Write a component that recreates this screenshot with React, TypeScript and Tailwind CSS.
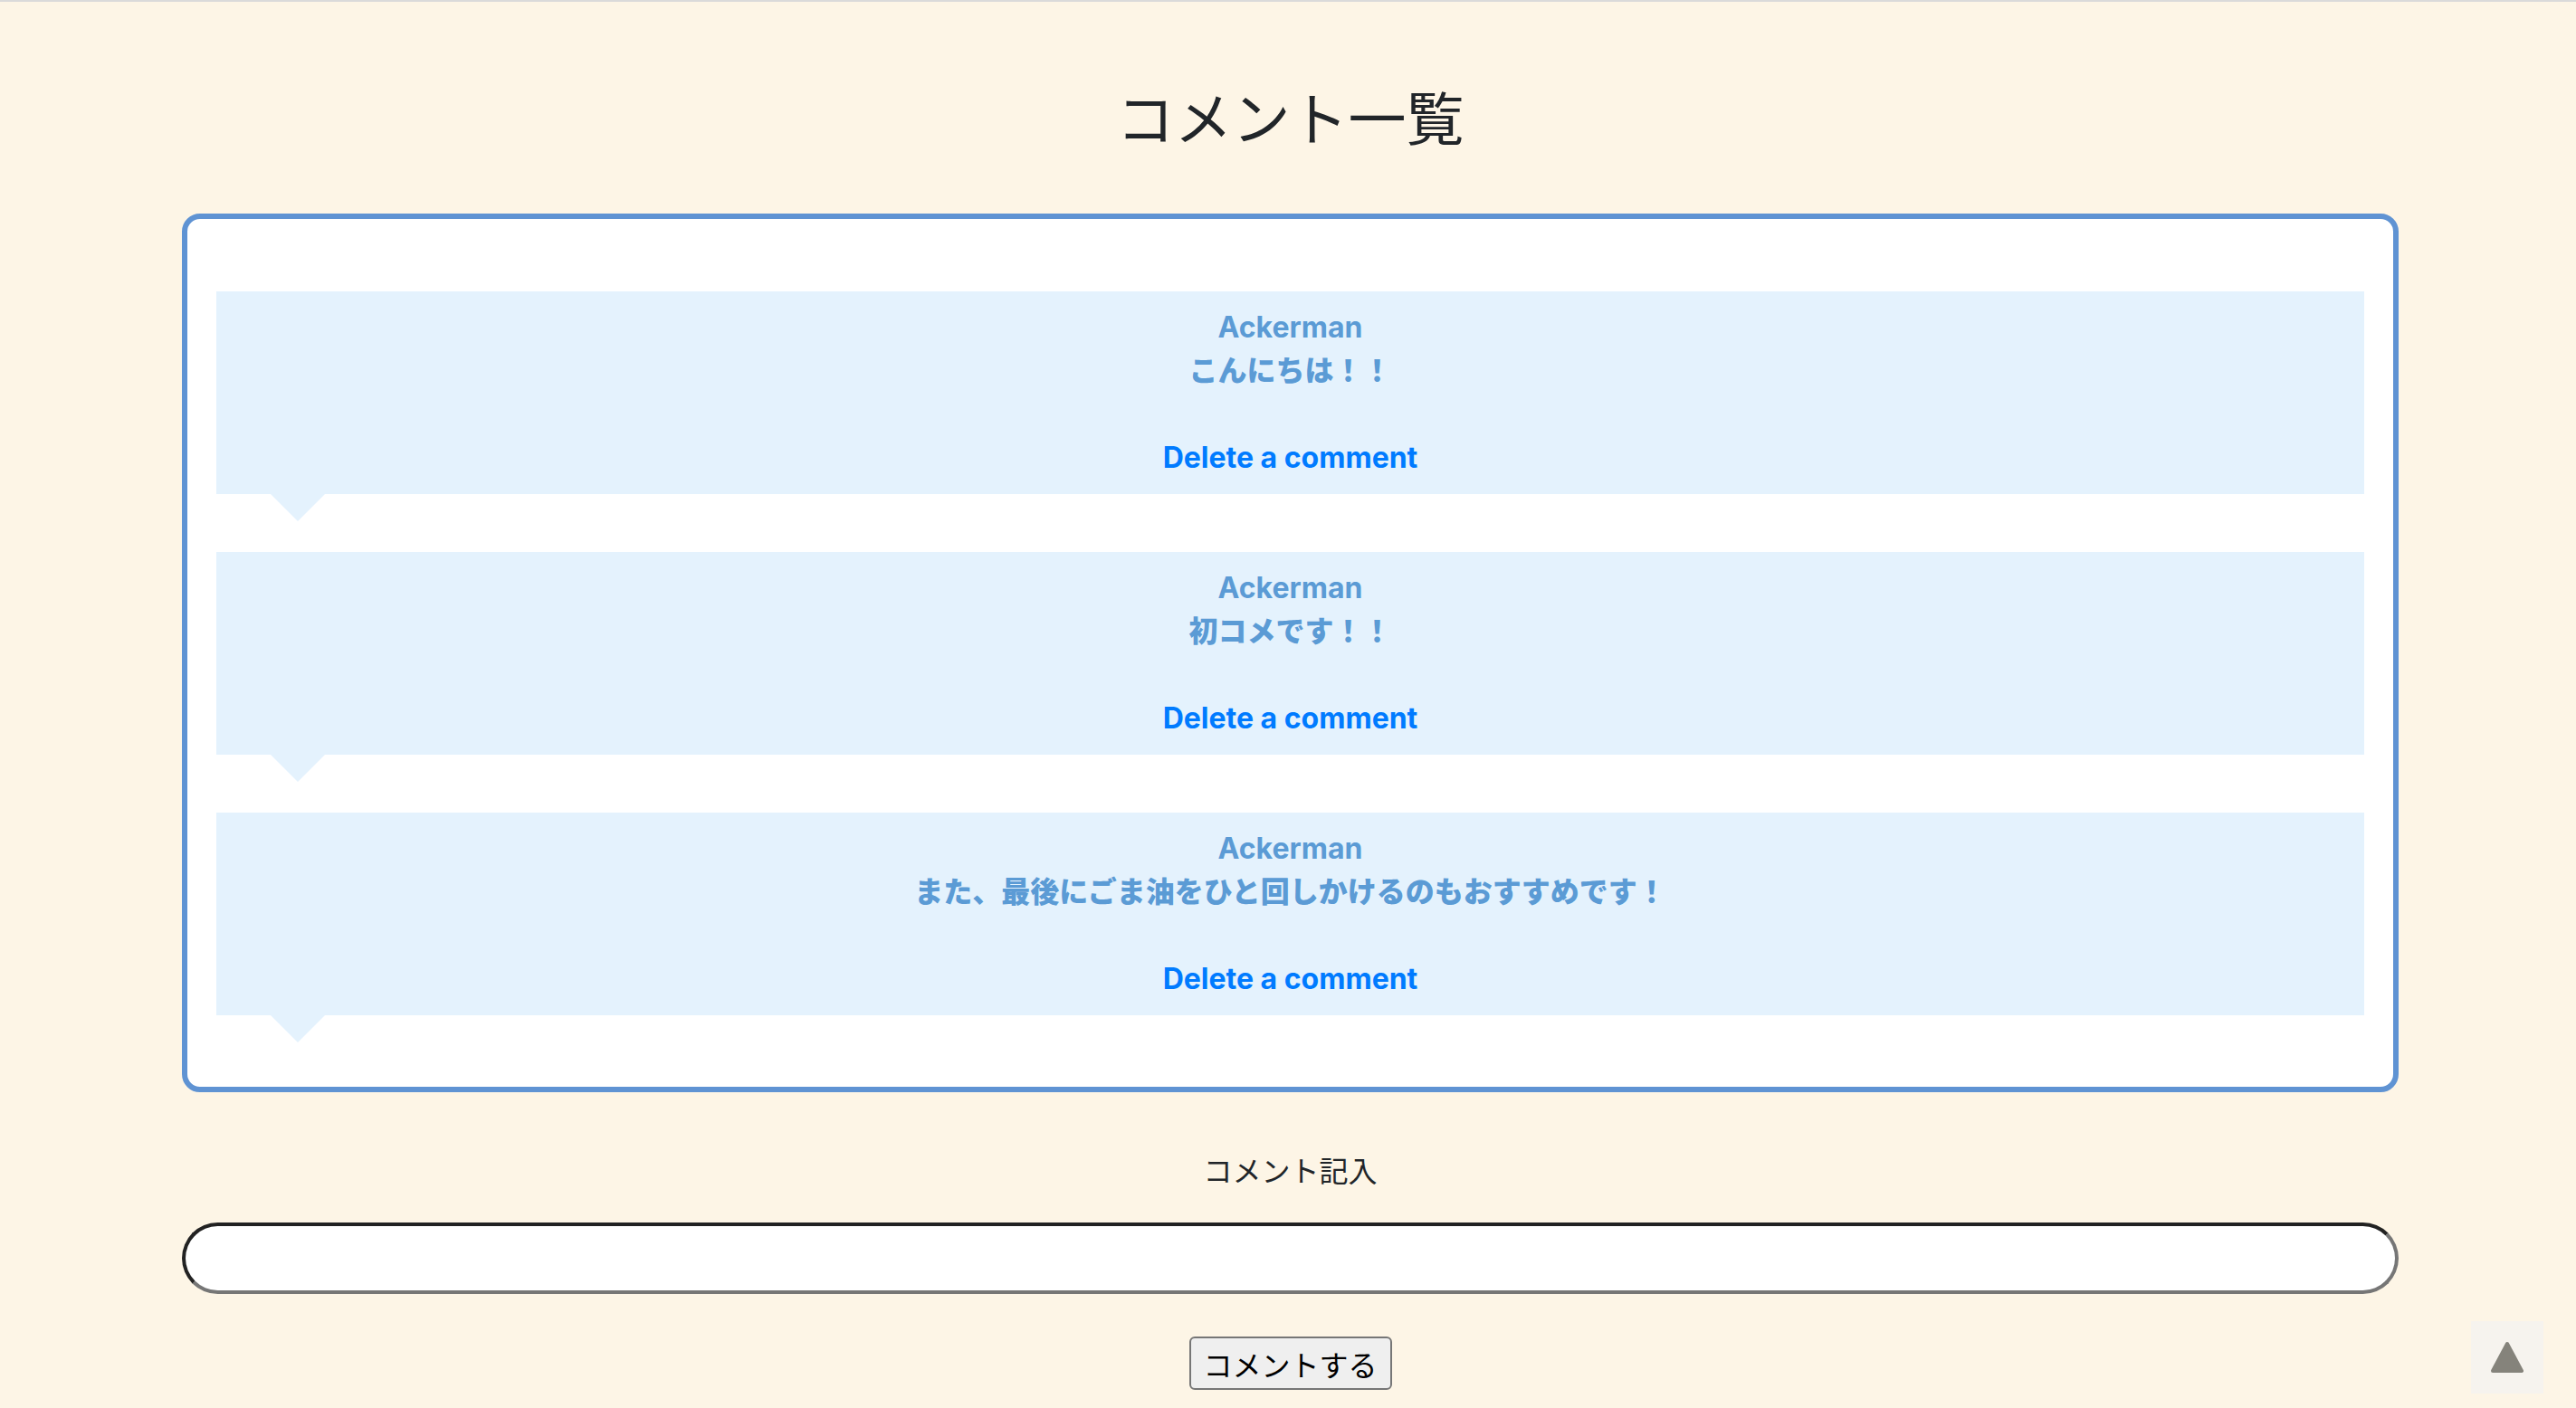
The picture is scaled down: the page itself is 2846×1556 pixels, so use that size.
const comments = [
  { id: 1, user: 'Ackerman', body: 'こんにちは！！' },
  { id: 2, user: 'Ackerman', body: '初コメです！！' },
  { id: 3, user: 'Ackerman', body: 'また、最後にごま油をひと回しかけるのもおすすめです！' },
]

function CommentBubble({ user, body }: { user: string; body: string }) {
  return (
    <div className="relative bg-[#e4f2fd] py-4 text-center text-[32px] leading-[48px] font-bold font-['Inter','Noto_Sans_CJK_JP',sans-serif]">
      <p className="text-[#5b9bd5]">{user}</p>
      <p className="text-[#5b9bd5] font-extrabold">{body}</p>
      <div className="h-[48px]" />
      <a href="#" className="text-[#007bff]">
        Delete a comment
      </a>
      {/* bubble tail */}
      <div className="absolute left-[60px] top-full h-0 w-0 border-x-[30px] border-t-[30px] border-x-transparent border-t-[#e4f2fd]" />
    </div>
  )
}

export default function App() {
  return (
    <div className="min-h-screen bg-[#fdf5e6] text-[#212529] font-['Noto_Sans_CJK_JP',sans-serif]">
      <div className="h-[2px] bg-[#dadada]" />

      <div className="ml-[201px] w-[2449px] pt-[87px] pb-10">
        <h1 className="text-center text-[64px] leading-[77px] font-normal">コメント一覧</h1>

        <div className="mt-[70px] flex flex-col gap-[64px] rounded-[20px] border-[6px] border-[#5f93d3] bg-white px-[32px] pt-[80px] pb-[79px]">
          {comments.map((c) => (
            <CommentBubble key={c.id} user={c.user} body={c.body} />
          ))}
        </div>

        <form className="mt-[61px]" onSubmit={(e) => e.preventDefault()}>
          <p className="text-center text-[32px] leading-[48px]">コメント記入</p>
          <input
            type="text"
            className="mt-[35px] block h-[79px] w-full rounded-full border-[4px] border-t-[#222] border-l-[#222] border-b-[#767676] border-r-[#767676] bg-white px-8 text-[32px] outline-none"
          />
          <button
            type="submit"
            className="mx-auto mt-[47px] block h-[59px] w-[224px] rounded-[6px] border-2 border-[#767676] bg-[#efefef] text-[32px] leading-none text-black"
          >
            コメントする
          </button>
        </form>
      </div>

      {/* scroll to top */}
      <a
        href="#"
        className="fixed right-[36px] bottom-[16px] flex h-[80px] w-[80px] items-center justify-center bg-[#f6f3ee]"
      >
        <svg width="36" height="36" viewBox="0 0 36 36">
          <polygon points="18,3 34,33 2,33" fill="#85837b" stroke="#85837b" strokeWidth="4" strokeLinejoin="round" />
        </svg>
      </a>
    </div>
  )
}
